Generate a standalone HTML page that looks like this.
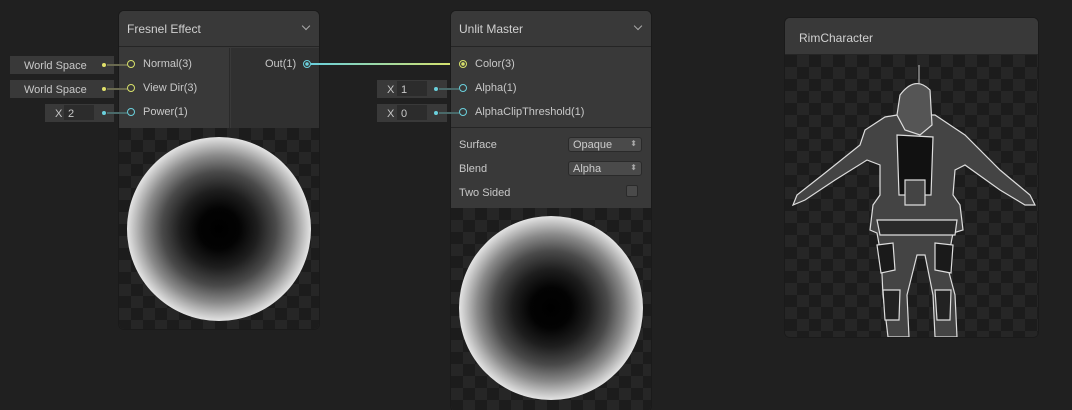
<!DOCTYPE html>
<html><head><style>
*{margin:0;padding:0;box-sizing:border-box}
html,body{width:1072px;height:410px;overflow:hidden}
body{background:#202020;position:relative;font-family:"Liberation Sans",sans-serif;font-size:11px;color:#c8c8c8}
.abs{position:absolute}
.node{position:absolute;background:#393939;border-radius:5px;overflow:hidden;box-shadow:0 0 0 1px #1a1a1a}
.hdr{position:absolute;left:0;right:0;top:0;height:36px;background:#393939;border-bottom:1px solid #252525;font-size:12px;color:#d0d0d0;padding:11px 8px}
.chev{position:absolute;right:10px;top:12px;width:6px;height:6px;border-right:1px solid #aaa;border-bottom:1px solid #aaa;transform:rotate(45deg)}
.checker{position:absolute;background-color:#1c1c1c;background-image:linear-gradient(45deg,#262626 25%,transparent 25%,transparent 75%,#262626 75%),linear-gradient(45deg,#262626 25%,transparent 25%,transparent 75%,#262626 75%);background-size:24px 24px;background-position:0 0,12px 12px}
.sphere{position:absolute;border-radius:50%;background:radial-gradient(circle closest-side,#000 0%,#030303 22%,#1e1e1e 42%,#4a4a4a 62%,#8a8a8a 80%,#c0c0c0 92%,#e4e4e4 100%)}
.port{position:absolute;width:8px;height:8px;border-radius:50%;border:1.5px solid #d8e26a}
.port.c{border-color:#6ad0dc}
.lbl{position:absolute;font-size:11px;color:#c8c8c8}
.field{position:absolute;height:18px;background:#393939;font-size:11px;color:#c8c8c8}
.dot{position:absolute;width:4px;height:4px;border-radius:50%;background:#e0e06a}
.dot.c{background:#6ad0dc}
.wire{position:absolute;height:2px;background:#5a5f5a}
.sel{position:absolute;height:15px;width:74px;background:#4a4a4a;border:1px solid #2a2a2a;border-radius:3px;font-size:11px;padding:1px 4px;color:#ccc}
.sel:after{content:"⬍";position:absolute;right:4px;top:1px;font-size:8px;color:#aaa}
</style></head><body>

<div class="node" style="left:119px;top:11px;width:200px;height:318px">
 <div class="hdr">Fresnel Effect<div class="chev"></div></div>
 <div class="abs" style="left:0;top:37px;width:111px;height:80px;background:#393939;border-right:1px solid #2a2a2a"></div>
 <div class="abs" style="left:112px;top:37px;width:88px;height:80px;background:#303030"></div>
 <div class="checker" style="left:0;top:117px;width:200px;height:201px"></div>
 <div class="sphere" style="left:8px;top:126px;width:184px;height:184px"></div>
 <div class="port" style="left:8px;top:49px"></div><div class="lbl" style="left:24px;top:47px">Normal(3)</div>
 <div class="port" style="left:8px;top:73px"></div><div class="lbl" style="left:24px;top:71px">View Dir(3)</div>
 <div class="port c" style="left:8px;top:97px"></div><div class="lbl" style="left:24px;top:95px">Power(1)</div>
 <div class="lbl" style="left:146px;top:47px">Out(1)</div>
 <div class="port c" style="left:184px;top:49px;background:radial-gradient(circle,#6ad0dc 40%,transparent 45%)"></div>
</div>

<div class="field" style="left:10px;top:56px;width:104px;padding:4px 0 0 14px">World Space</div>
<div class="dot" style="left:102px;top:63px"></div><div class="wire" style="left:107px;top:64px;width:20px;background:#6a6a50"></div>
<div class="field" style="left:10px;top:80px;width:104px;padding:4px 0 0 14px">World Space</div>
<div class="dot" style="left:102px;top:87px"></div><div class="wire" style="left:107px;top:88px;width:20px;background:#6a6a50"></div>
<div class="field" style="left:45px;top:104px;width:69px;padding:4px 0 0 10px">X<span class="abs" style="left:19px;top:1px;width:30px;height:15px;background:#2c2c2c;padding:3px 4px 0">2</span></div>
<div class="dot c" style="left:102px;top:111px"></div><div class="wire" style="left:107px;top:112px;width:20px;background:#4a6a6a"></div>

<div class="abs" style="left:311px;top:63px;width:144px;height:2px;background:linear-gradient(90deg,#6ad0dc,#d8e26a)"></div>

<div class="node" style="left:451px;top:11px;width:200px;height:400px">
 <div class="hdr">Unlit Master<div class="chev"></div></div>
 <div class="abs" style="left:0;top:37px;width:200px;height:80px;background:#393939;border-bottom:1px solid #252525"></div>
 <div class="abs" style="left:0;top:118px;width:200px;height:79px;background:#393939"></div>
 <div class="checker" style="left:0;top:197px;width:200px;height:213px"></div>
 <div class="sphere" style="left:8px;top:205px;width:184px;height:184px"></div>
 <div class="port" style="left:8px;top:49px;background:radial-gradient(circle,#d8e26a 40%,transparent 45%)"></div><div class="lbl" style="left:24px;top:47px">Color(3)</div>
 <div class="port c" style="left:8px;top:73px"></div><div class="lbl" style="left:24px;top:71px">Alpha(1)</div>
 <div class="port c" style="left:8px;top:97px"></div><div class="lbl" style="left:24px;top:95px">AlphaClipThreshold(1)</div>
 <div class="lbl" style="left:8px;top:128px">Surface</div><div class="sel" style="left:117px;top:126px">Opaque</div>
 <div class="lbl" style="left:8px;top:152px">Blend</div><div class="sel" style="left:117px;top:150px">Alpha</div>
 <div class="lbl" style="left:8px;top:176px">Two Sided</div>
 <div class="abs" style="left:175px;top:174px;width:12px;height:12px;background:#4a4a4a;border:1px solid #2a2a2a;border-radius:2px"></div>
</div>
<div class="field" style="left:377px;top:80px;width:70px;padding:4px 0 0 10px">X<span class="abs" style="left:20px;top:1px;width:30px;height:15px;background:#2c2c2c;padding:3px 4px 0">1</span></div>
<div class="dot c" style="left:434px;top:87px"></div><div class="wire" style="left:439px;top:88px;width:20px;background:#4a6a6a"></div>
<div class="field" style="left:377px;top:104px;width:70px;padding:4px 0 0 10px">X<span class="abs" style="left:20px;top:1px;width:30px;height:15px;background:#2c2c2c;padding:3px 4px 0">0</span></div>
<div class="dot c" style="left:434px;top:111px"></div><div class="wire" style="left:439px;top:112px;width:20px;background:#4a6a6a"></div>

<div class="node" style="left:785px;top:18px;width:253px;height:319px">
 <div class="hdr" style="height:37px;font-size:12px;padding:13px 14px">RimCharacter</div>
 <div class="checker" style="left:0;top:37px;width:253px;height:282px"></div>
 <svg class="abs" style="left:0;top:37px" width="253" height="282" viewBox="0 0 253 282">
  <g fill="#444" stroke="#ddd" stroke-width="1.2">
   <line x1="134" y1="10" x2="134" y2="30" stroke="#aaa"/>
   <path d="M80 75 L100 62 L112 60 L150 60 L165 70 L180 80 L215 115 L245 140 L250 150 L240 150 L215 135 L180 110 L170 115 L168 140 L175 150 L178 175 L168 178 L162 210 L170 240 L172 282 L150 282 L148 240 L140 200 L132 200 L122 240 L124 282 L103 282 L98 240 L96 200 L92 178 L85 175 L88 150 L95 140 L95 110 L82 105 L50 125 L20 145 L8 150 L12 140 L40 118 L75 90Z"/>
   <path d="M115 40 Q130 20 145 35 L147 70 L135 80 L120 75 L112 60Z" fill="#555"/>
   <path d="M112 80 L148 82 L146 140 L114 140Z" fill="#111"/>
   <path d="M120 125 L140 125 L140 150 L120 150Z" fill="#444"/>
   <path d="M92 165 L172 165 L170 180 L95 180Z" fill="#2a2a2a"/>
   <path d="M92 190 L108 188 L110 215 L96 218Z" fill="#1a1a1a"/>
   <path d="M150 188 L168 190 L166 218 L150 215Z" fill="#1a1a1a"/>
   <path d="M98 235 L115 235 L114 265 L100 265Z" fill="#222"/>
   <path d="M150 235 L166 235 L165 265 L152 265Z" fill="#222"/>
  </g>
 </svg>
</div>
</body></html>
